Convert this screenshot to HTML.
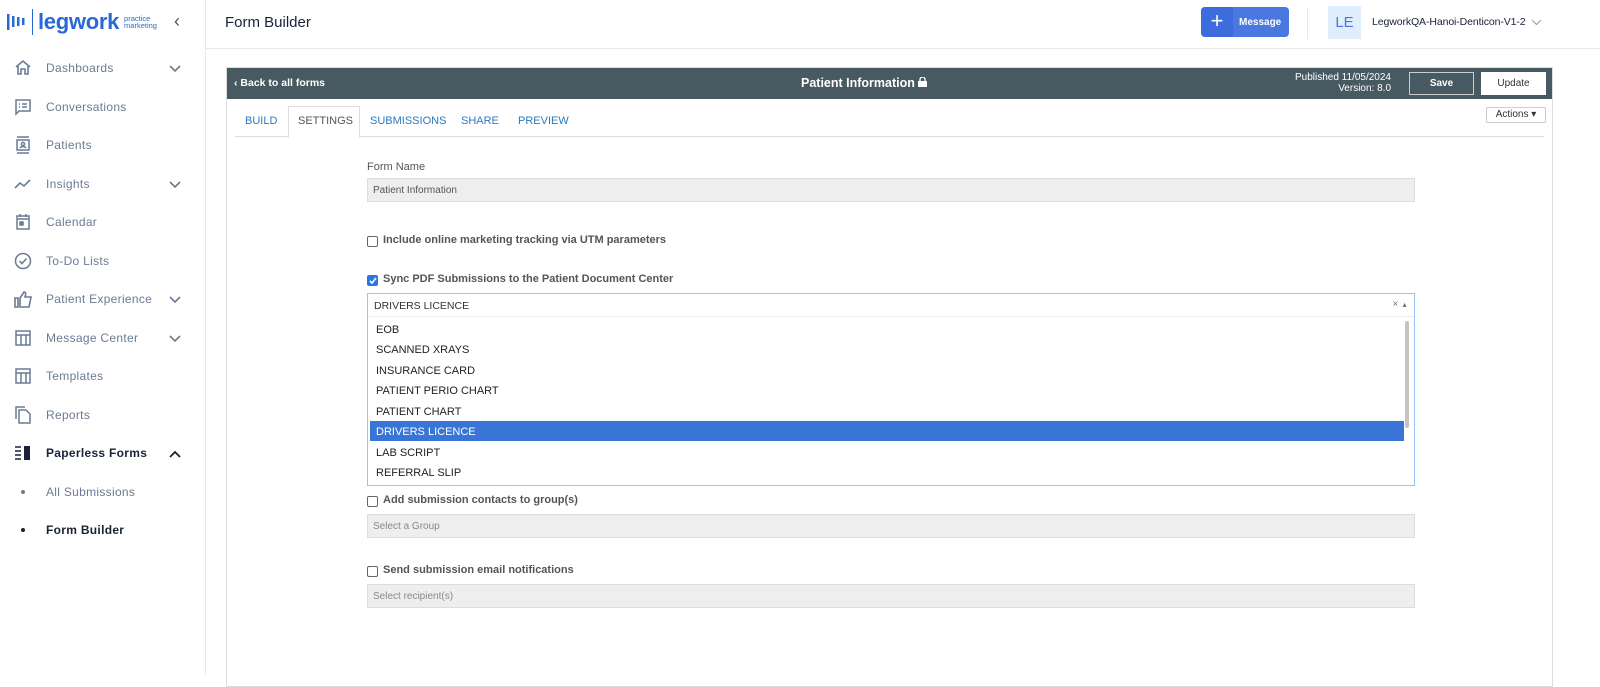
<!DOCTYPE html>
<html><head><meta charset="utf-8"><style>
*{box-sizing:border-box;margin:0;padding:0}
body{width:1600px;height:675px;overflow:hidden;background:#fff;font-family:"Liberation Sans",Arial,sans-serif;position:relative}
.side{position:absolute;left:0;top:0;width:206px;height:675px;border-right:1px solid #e6e9ee;background:#fff}
.logo{position:absolute;left:7px;top:9px;height:26px;display:flex;align-items:center}
.nav{position:absolute;left:0;width:206px;height:20px;display:flex;align-items:center;font-size:12px;color:#6b7a94;letter-spacing:.3px}
.nav .ic{position:absolute;left:14px;top:1px;width:18px;height:18px}
.nav .t{position:absolute;left:46px}
.nav .ch{position:absolute;left:169px;top:7px}
.nav.b{color:#1a2238;font-weight:bold}
.hdr{position:absolute;left:206px;top:0;right:0;height:49px;border-bottom:1px solid #e6e9ee}
.panel{position:absolute;left:226px;top:67px;width:1327px;height:620px;border:1px solid #ddd}
.bar{height:31px;background:#475a62;position:relative;color:#fff}
.tabs{position:absolute;top:31px;left:8px;right:8px;height:38px;border-bottom:1px solid #ddd}
.tab{position:absolute;top:16px;font-size:11px;color:#2a7bc1}
.lbl{position:absolute;left:140px;font-size:11px;color:#555}
.inp{position:absolute;left:140px;width:1048px;height:24px;background:#eee;border:1px solid #ddd;font-size:10px;color:#555;padding:6px 5px}
.cb{position:absolute;left:140px;width:11px;height:11px;border:1px solid #666;border-radius:2px;background:#fff}
.cl{position:absolute;left:156px;font-size:11px;color:#555;font-weight:bold}
.opt{position:absolute;left:143px;width:1034px;height:20px;font-size:11px;color:#222;padding:5px 6px}
</style></head><body>
<div class="side">
 <div class="logo">
  <svg width="22" height="22" viewBox="0 0 22 22"><rect x="0" y="3" width="2.5" height="16" fill="#2a68d6"/><rect x="5" y="5" width="2.5" height="11" fill="#2a68d6"/><rect x="10" y="6" width="2.5" height="9" fill="#2a68d6"/><rect x="15" y="7" width="2.5" height="7" fill="#2a68d6"/></svg>
  <div style="width:1px;height:26px;background:#2a68d6;margin:0 5px 0 3px"></div>
  <span style="font-size:22px;font-weight:bold;color:#2a68d6;letter-spacing:-.3px;line-height:22px">legwork</span>
  <span style="font-size:7.5px;color:#2a68d6;line-height:7px;margin-left:5px">practice<br>marketing</span>
 </div>
 <div style="position:absolute;left:174px;top:11px;font-size:18px;color:#555">&#8249;</div>
 <div class="nav" style="top:58px"><svg class="ic" viewBox="0 0 18 18" fill="none" stroke="#6b7a94" stroke-width="1.6"><path d="M2 8L9 2l7 6M4 7v8h3v-5h4v5h3V7"/></svg><span class="t">Dashboards</span><svg class="ch" width="12" height="8"><path d="M1 1l5 5 5-5" stroke="#6b7a94" stroke-width="1.6" fill="none"/></svg></div>
 <div class="nav" style="top:97px"><svg class="ic" viewBox="0 0 18 18" fill="none" stroke="#6b7a94" stroke-width="1.5"><path d="M2 2h14v11H5l-3 3z"/><path d="M5 6h1M8 6h5M5 9h1M8 9h5"/></svg><span class="t">Conversations</span></div>
 <div class="nav" style="top:135px"><svg class="ic" viewBox="0 0 18 18" fill="none" stroke="#6b7a94" stroke-width="1.5"><path d="M3 1h12M3 17h12"/><rect x="3" y="4" width="12" height="10"/><circle cx="9" cy="8" r="1.6"/><path d="M6 12c1-2 5-2 6 0"/></svg><span class="t">Patients</span></div>
 <div class="nav" style="top:174px"><svg class="ic" viewBox="0 0 18 18" fill="none" stroke="#6b7a94" stroke-width="1.6"><path d="M1 13l5-5 4 3 6-6"/></svg><span class="t">Insights</span><svg class="ch" width="12" height="8"><path d="M1 1l5 5 5-5" stroke="#6b7a94" stroke-width="1.6" fill="none"/></svg></div>
 <div class="nav" style="top:212px"><svg class="ic" viewBox="0 0 18 18" fill="none" stroke="#6b7a94" stroke-width="1.5"><rect x="3" y="3" width="12" height="13"/><path d="M3 6h12M6 1v3M12 1v3"/><rect x="6" y="9" width="3" height="3" fill="#6b7a94"/></svg><span class="t">Calendar</span></div>
 <div class="nav" style="top:251px"><svg class="ic" viewBox="0 0 18 18" fill="none" stroke="#6b7a94" stroke-width="1.5"><circle cx="9" cy="9" r="7.5"/><path d="M5.5 9l2.5 2.5 4.5-5"/></svg><span class="t">To-Do Lists</span></div>
 <div class="nav" style="top:289px"><svg class="ic" viewBox="0 0 18 18" fill="none" stroke="#6b7a94" stroke-width="1.6"><path d="M1 8h3v9H1zM6 8l4-6c2 0 2 2 1 5h6l-2 10H6z"/></svg><span class="t">Patient Experience</span><svg class="ch" width="12" height="8"><path d="M1 1l5 5 5-5" stroke="#6b7a94" stroke-width="1.6" fill="none"/></svg></div>
 <div class="nav" style="top:328px"><svg class="ic" viewBox="0 0 18 18" fill="none" stroke="#6b7a94" stroke-width="1.5"><rect x="2" y="2" width="14" height="14"/><path d="M2 6h14M7 6v10M12 6v10"/></svg><span class="t">Message Center</span><svg class="ch" width="12" height="8"><path d="M1 1l5 5 5-5" stroke="#6b7a94" stroke-width="1.6" fill="none"/></svg></div>
 <div class="nav" style="top:366px"><svg class="ic" viewBox="0 0 18 18" fill="none" stroke="#6b7a94" stroke-width="1.5"><rect x="2" y="2" width="14" height="14"/><path d="M2 6h14M7 6v10M12 6v10"/></svg><span class="t">Templates</span></div>
 <div class="nav" style="top:405px"><svg class="ic" viewBox="0 0 18 18" fill="none" stroke="#6b7a94" stroke-width="1.5"><path d="M2 13V1h9"/><path d="M5 4h7l4 4v9H5z"/></svg><span class="t">Reports</span></div>
 <div class="nav b" style="top:443px"><svg class="ic" viewBox="0 0 18 18"><path d="M1 3h6M1 7h6M1 11h6M1 15h6" stroke="#1a2238" stroke-width="1.6"/><rect x="10" y="2" width="6" height="14" fill="#1a2238"/></svg><span class="t">Paperless Forms</span><svg class="ch" width="12" height="8"><path d="M1 7l5-5 5 5" stroke="#1a2238" stroke-width="1.8" fill="none"/></svg></div>
 <div class="nav" style="top:482px"><span style="position:absolute;left:21px;width:4px;height:4px;border-radius:50%;background:#6b7a94"></span><span class="t">All Submissions</span></div>
 <div class="nav b" style="top:520px"><span style="position:absolute;left:21px;width:4px;height:4px;border-radius:50%;background:#1a2238"></span><span class="t">Form Builder</span></div>
</div>
<div class="hdr">
 <div style="position:absolute;left:19px;top:14px;font-size:15px;color:#1a2238">Form Builder</div>
 <div style="position:absolute;left:995px;top:7px;width:88px;height:30px;border-radius:4px;background:#4a78e0;overflow:hidden">
  <div style="position:absolute;left:0;top:0;width:32px;height:30px;background:#3d6ddd;color:#fff;font-size:22px;text-align:center;line-height:28px">+</div>
  <div style="position:absolute;left:38px;top:10px;color:#fff;font-size:10px;font-weight:bold">Message</div>
 </div>
 <div style="position:absolute;left:1101px;top:7px;width:1px;height:32px;background:#e6e9ee"></div>
 <div style="position:absolute;left:1122px;top:6px;width:33px;height:33px;background:#e0edfd;color:#4a78e0;font-size:15px;text-align:center;line-height:33px">LE</div>
 <div style="position:absolute;left:1166px;top:16px;font-size:10.5px;color:#1a2238;letter-spacing:-.1px">LegworkQA-Hanoi-Denticon-V1-2</div>
 <svg style="position:absolute;left:1325px;top:19px" width="11" height="7"><path d="M1 1l4.5 4.5L10 1" stroke="#999" fill="none"/></svg>
</div>
<div class="panel">
 <div class="bar">
  <div style="position:absolute;left:7px;top:9px;font-size:10.5px;font-weight:bold">&#8249; Back to all forms</div>
  <div style="position:absolute;left:574px;top:8px;font-size:12.5px;font-weight:bold">Patient Information <svg width="9" height="10" viewBox="0 0 9 10"><rect x="0" y="4" width="9" height="6" fill="#fff"/><path d="M2 4V2.5a2.5 2.5 0 015 0V4" stroke="#fff" fill="none" stroke-width="1.3"/></svg></div>
  <div style="position:absolute;right:161px;top:4px;font-size:10px;text-align:right;line-height:11px">Published 11/05/2024<br>Version: 8.0</div>
  <div style="position:absolute;left:1182px;top:4px;width:65px;height:23px;border:1px solid #ccc;font-size:10px;font-weight:bold;text-align:center;line-height:21px">Save</div>
  <div style="position:absolute;left:1254px;top:4px;width:65px;height:23px;background:#fff;color:#333;font-size:10px;text-align:center;line-height:23px">Update</div>
 </div>
 <div class="tabs">
  <div class="tab" style="left:10px">BUILD</div>
  <div style="position:absolute;left:53px;top:7px;width:72px;height:32px;border:1px solid #ddd;border-bottom:1px solid #fff;background:#fff"></div>
  <div class="tab" style="left:63px;color:#555">SETTINGS</div>
  <div class="tab" style="left:135px">SUBMISSIONS</div>
  <div class="tab" style="left:226px">SHARE</div>
  <div class="tab" style="left:283px">PREVIEW</div>
  <div style="position:absolute;left:1251px;top:8px;width:60px;height:16px;border:1px solid #ccc;border-radius:2px;font-size:10px;color:#333;text-align:center;line-height:14px">Actions &#9662;</div>
 </div>
 <div class="lbl" style="top:93px">Form Name</div>
 <div class="inp" style="top:110px">Patient Information</div>
 <div class="cb" style="top:168px"></div><div class="cl" style="top:166px">Include online marketing tracking via UTM parameters</div>
 <div class="cb" style="top:207px;background:#2a78e4;border-color:#2a78e4"><svg width="9" height="9" style="position:absolute;left:0;top:0"><path d="M2 5l2 2 4-5" stroke="#fff" stroke-width="1.6" fill="none"/></svg></div><div class="cl" style="top:205px">Sync PDF Submissions to the Patient Document Center</div>
 <div style="position:absolute;left:140px;top:225px;width:1048px;height:193px;border:1px solid #9cc3f0;background:#fff">
  <div style="position:absolute;left:6px;top:6px;font-size:10.5px;color:#333">DRIVERS LICENCE</div>
  <div style="position:absolute;right:6px;top:5px;font-size:10px;color:#777">&#215; <span style="font-size:7px">&#9650;</span></div>
  <div style="position:absolute;left:0;top:22px;width:1046px;height:1px;background:#eee"></div>
  <div style="position:absolute;left:1037px;top:27px;width:4px;height:107px;background:#c4c4c4;border-radius:2px"></div>
 </div>
 <div class="opt" style="top:251px">EOB</div>
 <div class="opt" style="top:271px">SCANNED XRAYS</div>
 <div class="opt" style="top:292px">INSURANCE CARD</div>
 <div class="opt" style="top:312px">PATIENT PERIO CHART</div>
 <div class="opt" style="top:333px">PATIENT CHART</div>
 <div class="opt" style="top:353px;background:#3875d7;color:#fff">DRIVERS LICENCE</div>
 <div class="opt" style="top:374px">LAB SCRIPT</div>
 <div class="opt" style="top:394px">REFERRAL SLIP</div>
 <div class="cb" style="top:428px"></div><div class="cl" style="top:426px">Add submission contacts to group(s)</div>
 <div class="inp" style="top:446px;color:#888">Select a Group</div>
 <div class="cb" style="top:498px"></div><div class="cl" style="top:496px">Send submission email notifications</div>
 <div class="inp" style="top:516px;color:#888">Select recipient(s)</div>
</div>
</body></html>
